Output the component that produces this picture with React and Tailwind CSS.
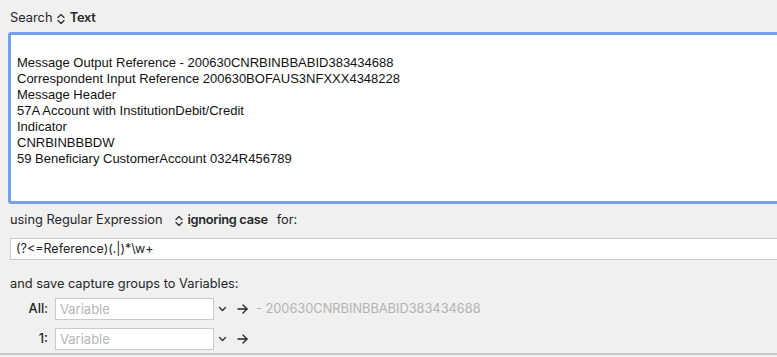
import React from "react";

const lines = [
  "",
  "Message Output Reference - 200630CNRBINBBABID383434688",
  "Correspondent Input Reference 200630BOFAUS3NFXXX4348228",
  "Message Header",
  "57A Account with InstitutionDebit/Credit",
  "Indicator",
  "CNRBINBBBDW",
  "59 Beneficiary CustomerAccount 0324R456789",
];

function UpDown() {
  return (
    <svg width="8" height="12" viewBox="0 0 8 12" className="inline-block" fill="none" stroke="#333" strokeWidth="1.3" strokeLinecap="round" strokeLinejoin="round">
      <path d="M1 4.5 L4 1.5 L7 4.5" />
      <path d="M1 7.5 L4 10.5 L7 7.5" />
    </svg>
  );
}

function Chevron() {
  return (
    <svg width="9" height="6" viewBox="0 0 9 6" fill="none" stroke="#333" strokeWidth="1.4" strokeLinecap="round" strokeLinejoin="round">
      <path d="M1.5 1.5 L4.5 4.5 L7.5 1.5" />
    </svg>
  );
}

function Arrow() {
  return (
    <svg width="11" height="10" viewBox="0 0 11 10" fill="none" stroke="#222" strokeWidth="1.3" strokeLinecap="round" strokeLinejoin="round">
      <path d="M1 5 H10" />
      <path d="M6 1 L10 5 L6 9" />
    </svg>
  );
}

function VarRow({ label, result }) {
  return (
    <div className="flex items-center h-[22px]">
      <span className="w-[48px] text-right font-medium text-[#222]">{label}</span>
      <input
        readOnly
        placeholder="Variable"
        className="ml-[7px] w-[159px] h-[22px] bg-white border border-[#c9c9c9] px-[4px] text-[13px] placeholder:text-[#b5b5b5] outline-none"
      />
      <span className="ml-[1px] w-[14px] flex justify-center"><Chevron /></span>
      <span className="ml-[8px]"><Arrow /></span>
      {result && <span className="ml-[8px] text-[#b3b3b3]">{result}</span>}
    </div>
  );
}

export default function App() {
  return (
    <div className="w-[777px] h-[357px] bg-[#f0f0f0] overflow-hidden text-[12.8px] text-[#262626] font-['Inter',sans-serif]">
      <div className="pl-[10px] pt-[10px] h-[32px] leading-[16px]">
        Search <span className="mx-[1px]"><UpDown /></span> <span className="font-semibold tracking-[-0.2px]">Text</span>
      </div>

      <div className="ml-[8px] w-[790px] h-[172px] rounded-[3px] border-[3px] border-[#76a0ec] bg-white">
        <div className="pl-[6px] pt-[4px] font-['Liberation_Sans',Arial,sans-serif] text-[13px] leading-[16px] text-[#111]">
          {lines.map((l, i) => (
            <div key={i} className="h-[16px] whitespace-nowrap">{l}</div>
          ))}
        </div>
      </div>

      <div className="pl-[10px] mt-[8px] mb-[10px] h-[16px] flex items-center leading-[16px]">
        <span>using Regular Expression</span>
        <span className="ml-[13px]"><UpDown /></span>
        <span className="ml-[4px] font-semibold tracking-[-0.3px]">ignoring case</span>
        <span className="ml-[9px]">for:</span>
      </div>

      <div className="ml-[10px] w-[790px] h-[22px] bg-white border border-[#c9c9c9] flex items-center pl-[5px] text-[12.5px] text-[#222]">
        (?&lt;=Reference)(.|)*\w+
      </div>

      <div className="pl-[10px] mt-[16px] mb-[6px] h-[16px] leading-[16px]">and save capture groups to Variables:</div>

      <div className="flex flex-col gap-[8px]">
        <VarRow label="All:" result="- 200630CNRBINBBABID383434688" />
        <VarRow label="1:" />
      </div>

      <div className="mt-[3px] border-t-2 border-[#c8c8c8]" />
    </div>
  );
}
